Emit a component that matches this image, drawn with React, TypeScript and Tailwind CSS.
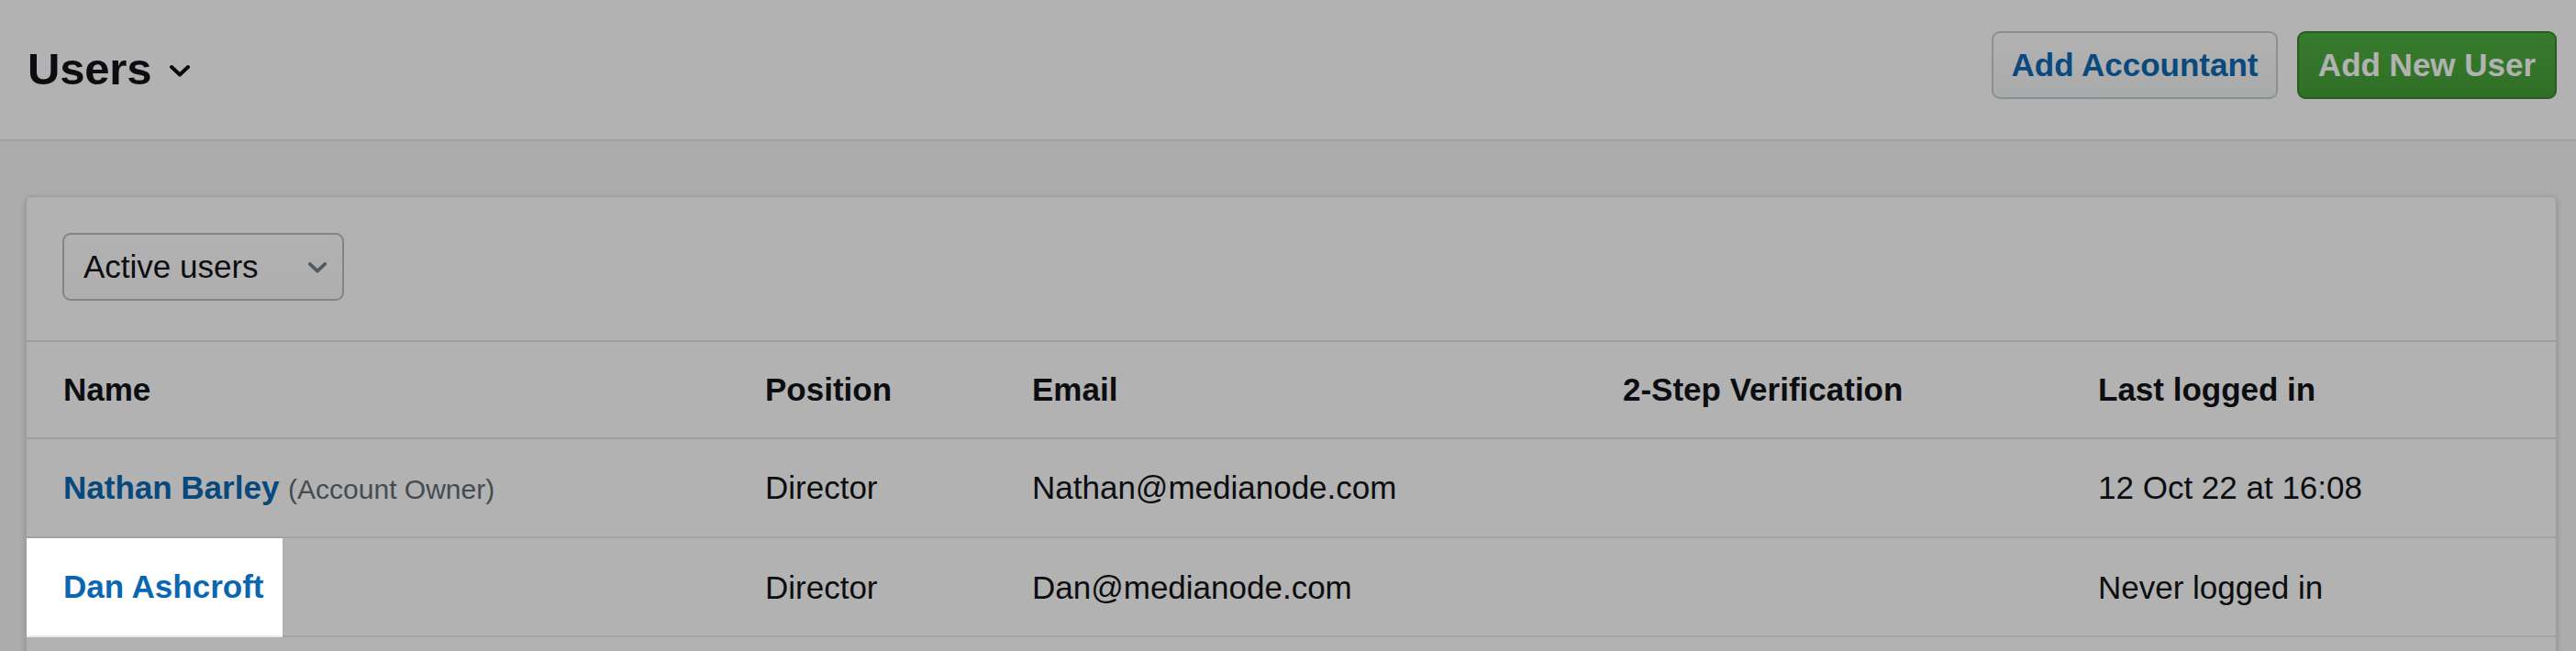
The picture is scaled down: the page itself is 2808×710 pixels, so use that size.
import React from "react";

function Chevron({ className, color }: { className?: string; color: string }) {
  return (
    <svg className={className} viewBox="0 0 24 14" fill="none">
      <polyline
        points="3,3 12,11.5 21,3"
        stroke={color}
        strokeWidth="4"
        strokeLinecap="round"
        strokeLinejoin="round"
      />
    </svg>
  );
}

const cols = "grid grid-cols-[805px_291px_644px_518px_1fr]";

export default function App() {
  return (
    <div className="h-[710px] w-[2808px] overflow-hidden bg-[#f6f6f6] font-['Liberation_Sans',Arial,Helvetica,sans-serif] text-[#121417]">
      {/* Page header */}
      <div className="h-[154px] bg-white border-b-2 border-[#e1e6ea] flex justify-between items-start pl-[28px] pr-[21px]">
        <div className="mt-[51px] h-[49px] flex items-center gap-[19px]">
          <h1 className="text-[49px] leading-[49px] font-bold tracking-[-0.2px] pl-[2px]">Users</h1>
          <Chevron className="w-[24px] h-[14px] mt-[2px]" color="#0c0e10" />
        </div>
        <div className="mt-[34px] flex gap-[21px]">
          <button className="w-[312px] h-[74px] rounded-[9px] border-2 border-[#c6cdd2] bg-gradient-to-b from-white to-[#f3f4f5] text-[35px] font-bold text-[#0f69b3] flex items-center justify-center">
            Add Accountant
          </button>
          <button className="w-[283px] h-[74px] rounded-[9px] border-2 border-[#3c8530] bg-gradient-to-b from-[#4fb141] to-[#459f38] text-[35px] font-bold text-white flex items-center justify-center">
            Add New User
          </button>
        </div>
      </div>

      {/* Card */}
      <div className="mt-[60px] ml-[28px] mr-[21px] bg-white rounded-[6px] border border-[#dfe3e6] shadow-[0_2px_6px_rgba(0,0,0,0.18)] pb-[200px]">
        <div className="pt-[39px] pb-[43px] pl-[39px] border-b-2 border-[#dfe4e8]">
          <div className="w-[307px] h-[74px] rounded-[9px] border-2 border-[#b6c0c7] bg-gradient-to-b from-white to-[#fafafa] flex items-center justify-between pl-[21px] pr-[16px]">
            <span className="text-[35px]">Active users</span>
            <Chevron className="w-[22px] h-[13px]" color="#758189" />
          </div>
        </div>

        {/* Table header */}
        <div className={`${cols} h-[106px] items-center border-b-2 border-[#dfe4e8] text-[35px] font-bold`}>
          <div className="pl-[40px]">Name</div>
          <div>Position</div>
          <div>Email</div>
          <div>2-Step Verification</div>
          <div>Last logged in</div>
        </div>

        {/* Row 1 */}
        <div className={`${cols} h-[108px] items-center border-b-2 border-[#e8ecec] text-[35px]`}>
          <div className="pl-[40px] whitespace-nowrap">
            <a className="font-bold text-[#0b68b3]">Nathan Barley</a>{" "}
            <span className="text-[30px] text-[#646d74]">(Account Owner)</span>
          </div>
          <div>Director</div>
          <div>Nathan@medianode.com</div>
          <div></div>
          <div>12 Oct 22 at 16:08</div>
        </div>

        {/* Row 2 (highlighted) */}
        <div className={`${cols} h-[108px] items-center border-b-2 border-[#e8ecec] text-[35px]`}>
          <div className="self-start">
            <div className="relative z-10 w-[279px] h-[108px] bg-white border-b-2 border-[#e8ecec] pl-[40px] flex items-center shadow-[0_0_0_9999px_rgba(0,0,0,0.3)]">
              <a className="font-bold text-[#0967b2] whitespace-nowrap">Dan Ashcroft</a>
            </div>
          </div>
          <div>Director</div>
          <div>Dan@medianode.com</div>
          <div></div>
          <div>Never logged in</div>
        </div>
      </div>
    </div>
  );
}
